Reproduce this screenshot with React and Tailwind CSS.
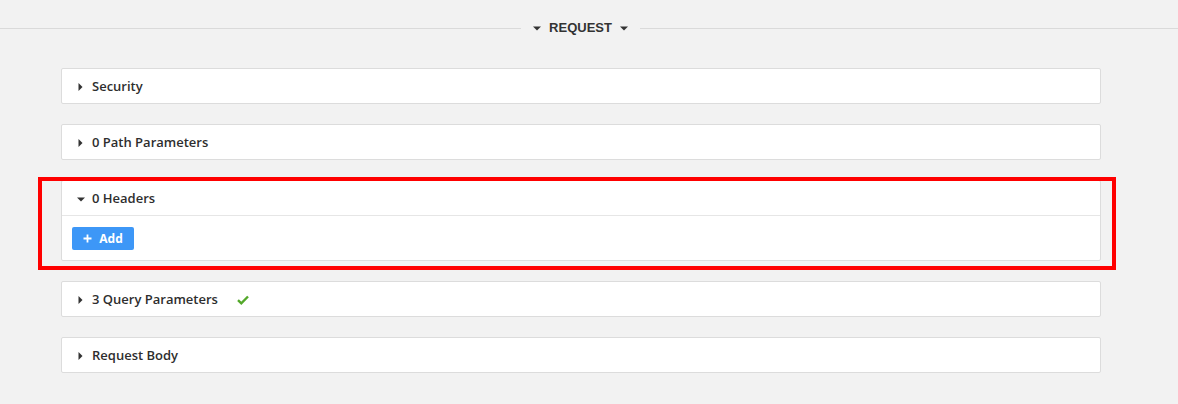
import React from 'react';

const Caret = ({ open }) =>
  open ? (
    <svg width="8" height="5" viewBox="0 0 8 5" className="shrink-0 text-[#333]">
      <path d="M0 0.5 L8 0.5 L4 4.5 Z" fill="currentColor" />
    </svg>
  ) : (
    <svg width="5" height="8" viewBox="0 0 5 8" className="shrink-0 text-[#333]">
      <path d="M0.5 0 L4.5 4 L0.5 8 Z" fill="currentColor" />
    </svg>
  );

function Section({ title, open, check, children }) {
  return (
    <div className="bg-white border border-[#dcdcdc] rounded-[2px]">
      <div className={`h-[34px] pt-[2px] flex items-center ${open ? 'pl-[15px] gap-[7px]' : 'pl-[16px] gap-[9px]'}`}>
        <Caret open={open} />
        <span className="text-[13px] font-semibold text-[#2e2e2e]">{title}</span>
        {check && (
          <svg width="12" height="10" viewBox="0 0 12 10" className="ml-[10px]">
            <path d="M1 5.2 L4.3 8.3 L11 1.5" stroke="#53a82a" strokeWidth="2.4" fill="none" />
          </svg>
        )}
      </div>
      {children}
    </div>
  );
}

export default function App() {
  return (
    <div className="w-[1178px] h-[404px] bg-[#f2f2f2] overflow-hidden" style={{ fontFamily: '"Open Sans", "Liberation Sans", sans-serif' }}>
      <div className="flex items-center pt-[19px] h-[18px] box-content">
        <div className="w-[521px] shrink-0 border-t border-[#dadada]" />
        <div className="w-[119px] flex items-center justify-center gap-[8px] text-[13px] font-bold text-[#333] font-['Liberation_Sans',sans-serif]">
          <Caret open />
          <span>REQUEST</span>
          <Caret open />
        </div>
        <div className="flex-1 border-t border-[#dadada]" />
      </div>

      <div className="ml-[61px] w-[1040px] mt-[31px] flex flex-col gap-[20px]">
        <Section title="Security" />
        <Section title="0 Path Parameters" />
        <div className="relative">
          <Section title="0 Headers" open>
            <div className="border-t border-[#e6e6e6] h-[45px] pl-[10px] pt-[11px]">
              <button className="h-[23px] w-[62px] bg-[#3d97f7] rounded-[2px] flex items-center justify-center gap-[7px] text-white text-[12px] font-bold">
                <svg width="9" height="9" viewBox="0 0 9 9">
                  <path d="M4.5 0.5 V8.5 M0.5 4.5 H8.5" stroke="white" strokeWidth="1.8" />
                </svg>
                Add
              </button>
            </div>
          </Section>
          <div className="absolute left-[-23px] right-[-15px] top-[-3px] bottom-[-9px] border-[4px] border-[#ff0000] pointer-events-none" />
        </div>
        <Section title="3 Query Parameters" check />
        <Section title="Request Body" />
      </div>
    </div>
  );
}
